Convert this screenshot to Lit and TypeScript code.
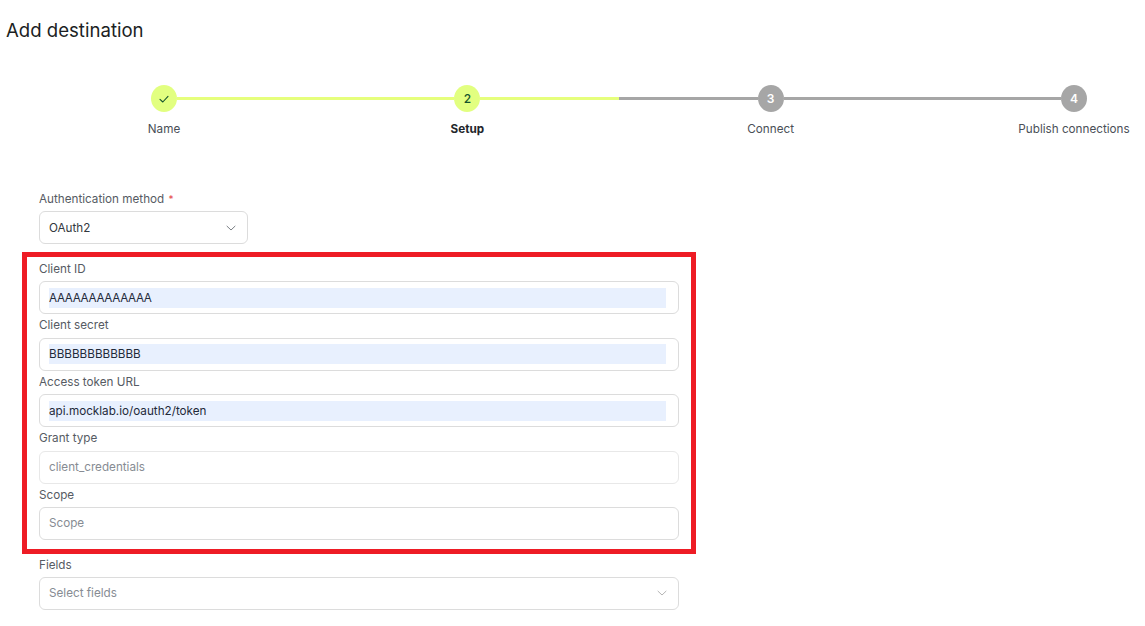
import { LitElement, html, css } from "lit";
import { customElement } from "lit/decorators.js";

const chevron = html`<svg class="chev" width="12" height="12" viewBox="0 0 12 12" fill="none"><path d="M2 4.2 6 8l4-3.8" stroke="currentColor" stroke-width="1" stroke-linecap="round" stroke-linejoin="round"/></svg>`;
const check = html`<svg width="12" height="12" viewBox="0 0 12 12" fill="none"><path d="M2 6.3 4.8 9 10 3.4" stroke="#14532d" stroke-width="1.1" stroke-linecap="round" stroke-linejoin="round"/></svg>`;

@customElement("app-root")
export class AppRoot extends LitElement {
  static styles = css`
    :host { display: block; width: 1145px; height: 626px; overflow: hidden; background: #fff; font-family: Inter, "Liberation Sans", sans-serif; color: #1f2328; box-sizing: border-box; }
    h1 { margin: 0; padding: 18px 0 0 6px; font-size: 18.6px; line-height: 24px; font-weight: 400; color: #1c1f24; }
    .stepper { display: flex; padding: 43px 58px 0 151px; }
    .step { width: 26px; display: flex; flex-direction: column; align-items: center; flex: none; }
    .dot { width: 26px; height: 27px; border-radius: 50%; display: flex; align-items: center; justify-content: center; font-size: 12px; font-weight: 500; }
    .dot.on { background: #e2ff80; color: #14532d; }
    .dot.off { background: #a6a6a6; color: #fff; font-weight: 600; }
    .lbl { margin-top: 9px; font-size: 11.7px; line-height: 16px; white-space: nowrap; color: #4a4f57; }
    .lbl.cur { font-weight: 700; color: #22262b; }
    .line { flex: 1; height: 3px; margin-top: 12px; background: #a6a6a6; }
    .line.green { background: #e6ff7c; }
    .line.half { background: linear-gradient(to right, #e6ff7c 0 139px, #a6a6a6 139px); }
    .form { padding: 51px 0 0 39px; }
    .auth { width: 209px; }
    .field { display: block; }
    .field-label { height: 23.4px; font-size: 11.7px; line-height: 22px; color: #565b63; white-space: nowrap; }
    .auth .field-label, .fields .field-label { height: 23px; }
    .req { color: #e5484d; font-size: 10px; margin-left: 1px; }
    .box { height: 33px; box-sizing: border-box; border: 1px solid #dcdcdc; border-radius: 6px; padding: 0 10px 0 9px; display: flex; align-items: center; justify-content: space-between; font-size: 11.7px; color: #33383e; background: #fff; }
    .box.muted { color: #878c93; }
    .box.disabled { color: #878c93; border-color: #e8e8e8; }
    .fill { flex: 1; height: 20px; line-height: 20px; margin-right: 2px; background: #e8f0fe; color: #1f2a3a; }
    .fill.narrow { letter-spacing: -0.33px; }
    .chev { color: #7b7f85; flex: none; display: block; }
    .chev-light .chev { color: #b5b5b5; }
    .marked { margin: 8px 0 0 -17px; width: 674px; box-sizing: border-box; border: 5px solid #ee1c25; padding: 1px 12px 9px; }
    .fields { width: 640px; }
  `;

  render() {
    return html`
      <h1>Add destination</h1>
      <div class="stepper">
        <div class="step"><div class="dot on">${check}</div><div class="lbl">Name</div></div>
        <div class="line green"></div>
        <div class="step"><div class="dot on">2</div><div class="lbl cur">Setup</div></div>
        <div class="line half"></div>
        <div class="step"><div class="dot off">3</div><div class="lbl">Connect</div></div>
        <div class="line"></div>
        <div class="step"><div class="dot off">4</div><div class="lbl">Publish connections</div></div>
      </div>
      <div class="form">
        <div class="field auth">
          <div class="field-label">Authentication method <span class="req">*</span></div>
          <div class="box"><span>OAuth2</span>${chevron}</div>
        </div>
        <div class="marked">
          <div class="field">
            <div class="field-label">Client ID</div>
            <div class="box"><div class="fill narrow">AAAAAAAAAAAAA</div></div>
          </div>
          <div class="field">
            <div class="field-label">Client secret</div>
            <div class="box"><div class="fill">BBBBBBBBBBBB</div></div>
          </div>
          <div class="field">
            <div class="field-label">Access token URL</div>
            <div class="box"><div class="fill">api.mocklab.io/oauth2/token</div></div>
          </div>
          <div class="field">
            <div class="field-label">Grant type</div>
            <div class="box disabled">client_credentials</div>
          </div>
          <div class="field">
            <div class="field-label">Scope</div>
            <div class="box muted">Scope</div>
          </div>
        </div>
        <div class="field fields">
          <div class="field-label">Fields</div>
          <div class="box muted"><span>Select fields</span><span class="chev-light">${chevron}</span></div>
        </div>
      </div>
    `;
  }
}
